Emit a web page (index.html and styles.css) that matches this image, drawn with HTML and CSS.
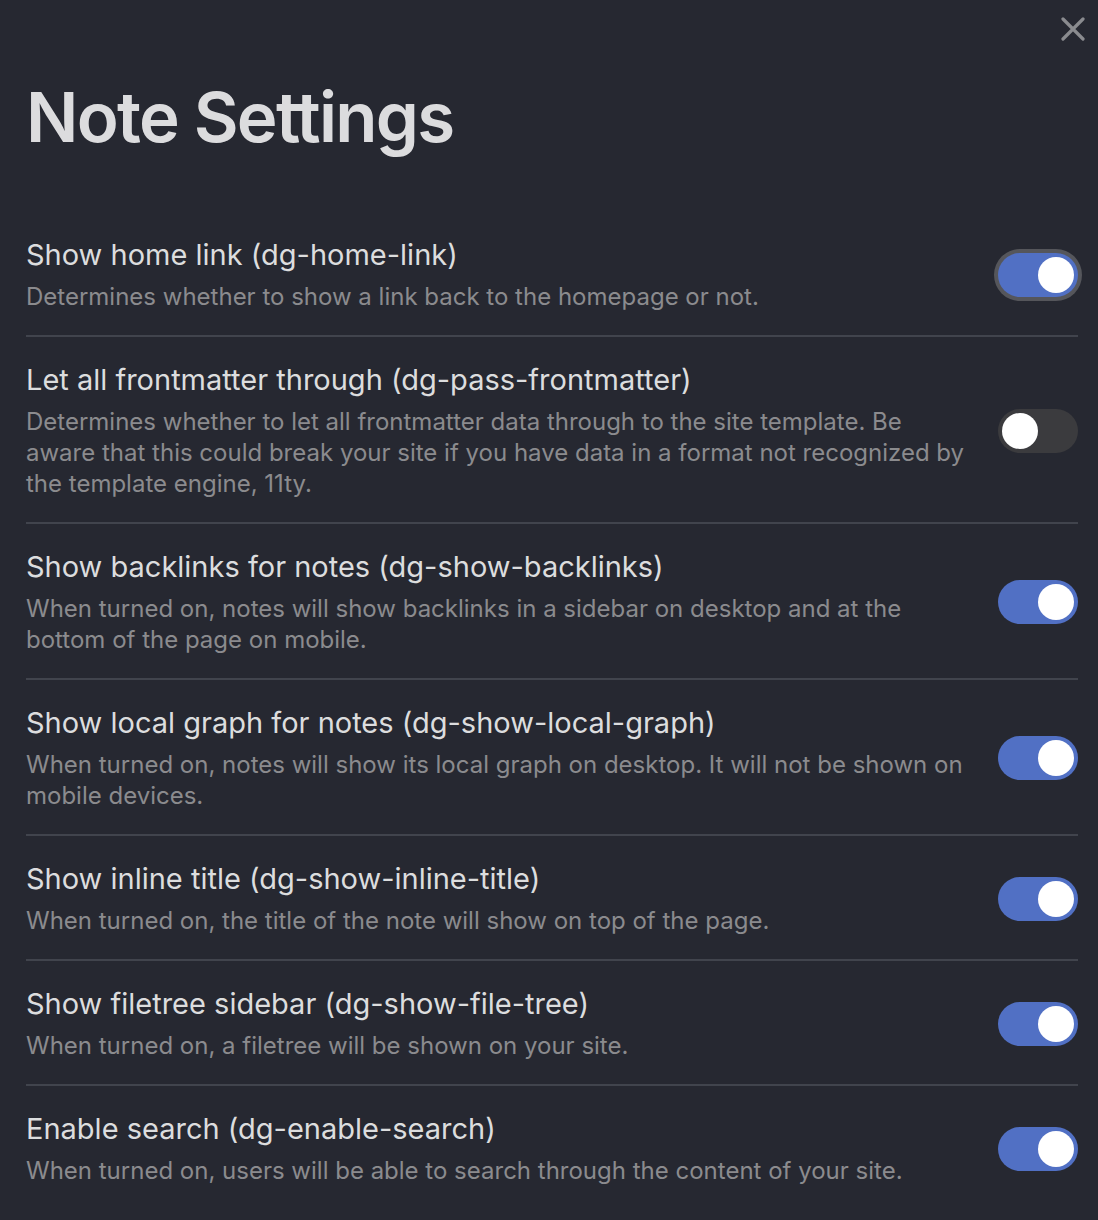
FILE: index.html
```html
<!DOCTYPE html>
<html lang="en">
<head>
<meta charset="utf-8">
<title>Note Settings</title>
<link rel="stylesheet" href="styles.css">
</head>
<body>
<div class="modal">
  <button class="close" aria-label="Close">
    <svg width="24" height="24" viewBox="0 0 24 24"><path d="M2 2 L22 22 M22 2 L2 22" stroke="#8a8b8f" stroke-width="3.2" stroke-linecap="round" fill="none"/></svg>
  </button>
  <h1 class="title">Note Settings</h1>
  <div class="list">
    <div class="item">
      <div class="info">
        <div class="name">Show home link (dg-home-link)</div>
        <div class="desc">Determines whether to show a link back to the homepage or not.</div>
      </div>
      <div class="toggle on focus"><span class="knob"></span></div>
    </div>
    <div class="item">
      <div class="info">
        <div class="name">Let all frontmatter through (dg-pass-frontmatter)</div>
        <div class="desc">Determines whether to let all frontmatter data through to the site template. Be aware that this could break your site if you have data in a format not recognized by the template engine, 11ty.</div>
      </div>
      <div class="toggle"><span class="knob"></span></div>
    </div>
    <div class="item">
      <div class="info">
        <div class="name">Show backlinks for notes (dg-show-backlinks)</div>
        <div class="desc">When turned on, notes will show backlinks in a sidebar on desktop and at the bottom of the page on mobile.</div>
      </div>
      <div class="toggle on"><span class="knob"></span></div>
    </div>
    <div class="item">
      <div class="info">
        <div class="name">Show local graph for notes (dg-show-local-graph)</div>
        <div class="desc">When turned on, notes will show its local graph on desktop. It will not be shown on mobile devices.</div>
      </div>
      <div class="toggle on"><span class="knob"></span></div>
    </div>
    <div class="item">
      <div class="info">
        <div class="name">Show inline title (dg-show-inline-title)</div>
        <div class="desc">When turned on, the title of the note will show on top of the page.</div>
      </div>
      <div class="toggle on"><span class="knob"></span></div>
    </div>
    <div class="item">
      <div class="info">
        <div class="name">Show filetree sidebar (dg-show-file-tree)</div>
        <div class="desc">When turned on, a filetree will be shown on your site.</div>
      </div>
      <div class="toggle on"><span class="knob"></span></div>
    </div>
    <div class="item">
      <div class="info">
        <div class="name">Enable search (dg-enable-search)</div>
        <div class="desc">When turned on, users will be able to search through the content of your site.</div>
      </div>
      <div class="toggle on"><span class="knob"></span></div>
    </div>
  </div>
</div>
</body>
</html>
```

FILE: styles.css
```css
html, body {
  margin: 0;
  padding: 0;
  background: #262831;
}
body {
  font-family: Inter, "Noto Sans", sans-serif;
  color: #dcddde;
}
.modal {
  position: relative;
  width: 1098px;
  height: 1220px;
  box-sizing: border-box;
  padding: 0 20px 0 26px;
  overflow: hidden;
}
.close {
  position: absolute;
  top: 17px;
  right: 13px;
  width: 24px;
  height: 24px;
  padding: 0;
  border: 0;
  background: none;
  display: flex;
}
.title {
  margin: 0;
  padding-top: 75px;
  height: 137px;
  box-sizing: content-box;
  font-size: 69px;
  line-height: 84px;
  font-weight: 600;
  letter-spacing: -0.025em;
  color: #dcdcde;
}
.list {
  display: flex;
  flex-direction: column;
}
.item {
  display: flex;
  align-items: center;
  gap: 30px;
  padding: 25px 0 23px;
  border-top: 2px solid #41444d;
}
.item:first-child {
  border-top: 0;
}
.info {
  flex: 1 1 auto;
}
.name {
  font-size: 29px;
  line-height: 36px;
  margin-bottom: 8px;
  color: #dcddde;
}
.desc {
  font-size: 24px;
  line-height: 31px;
  color: #8b8b8e;
}
.toggle {
  flex: 0 0 auto;
  width: 80px;
  height: 44px;
  border-radius: 22px;
  background: #3b3b3e;
  display: flex;
  align-items: center;
  padding: 0 4px;
  box-sizing: border-box;
}
.toggle .knob {
  width: 36px;
  height: 36px;
  border-radius: 50%;
  background: #ffffff;
}
.toggle.on {
  background: #5170c4;
  justify-content: flex-end;
}
.toggle.focus {
  box-shadow: 0 0 0 4px #55565b;
}
```
